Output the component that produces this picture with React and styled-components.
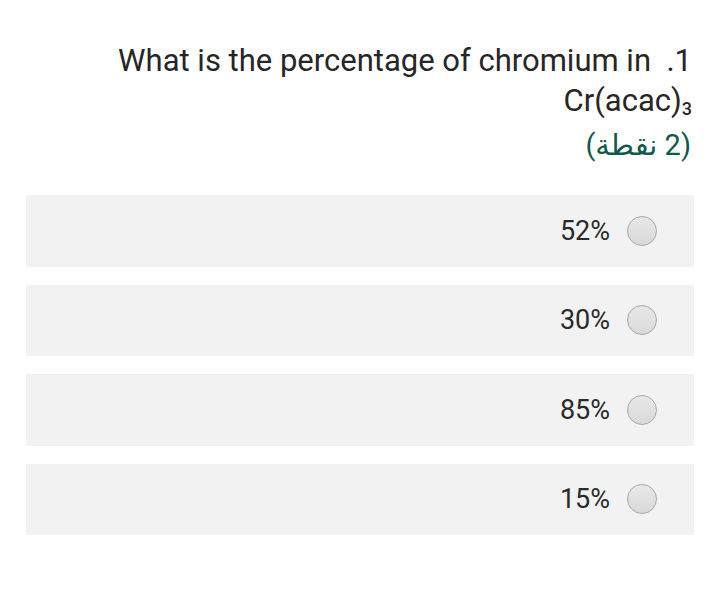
import React from "react";
import styled, { createGlobalStyle } from "styled-components";

const Global = createGlobalStyle`
  html, body { margin: 0; padding: 0; background: #ffffff; }
  body { font-family: Roboto, "Noto Sans", Arial, sans-serif; }
`;

const Page = styled.div`
  direction: rtl;
  padding: 41px 26px 40px;
  display: flex;
  flex-direction: column;
`;

const Question = styled.div`
  padding-right: 2px;
  font-size: 31px;
  line-height: 40px;
  color: #262626;
  text-align: right;
`;

const Sub = styled.sub`
  font-size: 18px;
  font-weight: 500;
  vertical-align: -4px;
  line-height: 0;
`;

const Points = styled.div`
  margin-top: 3px;
  font-size: 29px;
  line-height: 42px;
  color: #0f5a4a;
  padding-right: 1px;
  font-family: Roboto, "Noto Sans", "DejaVu Sans", sans-serif;
`;

const Options = styled.div`
  margin-top: 29px;
  display: flex;
  flex-direction: column;
  gap: 18px;
`;

const Option = styled.label`
  height: 71.5px;
  background: #f2f2f2;
  display: flex;
  align-items: center;
  gap: 17px;
  padding-right: 37px;
`;

const Radio = styled.span`
  width: 30px;
  height: 30px;
  border-radius: 50%;
  background: linear-gradient(#e8e8e8, #d9d9d9);
  border: 1.5px solid #a8a8a8;
  box-sizing: border-box;
  flex: none;
`;

const OptionText = styled.span`
  font-size: 27px;
  color: #2a2a2a;
  direction: ltr;
`;

const options = ["52%", "30%", "85%", "15%"];

export default function App() {
  return (
    <>
      <Global />
      <Page>
        <Question>
          1.&nbsp; What is the percentage of chromium in
          <br />
          Cr(acac)<Sub>3</Sub>
          <Points>(2 نقطة)</Points>
        </Question>
        <Options>
          {options.map((o) => (
            <Option key={o}>
              <Radio />
              <OptionText>{o}</OptionText>
            </Option>
          ))}
        </Options>
      </Page>
    </>
  );
}
